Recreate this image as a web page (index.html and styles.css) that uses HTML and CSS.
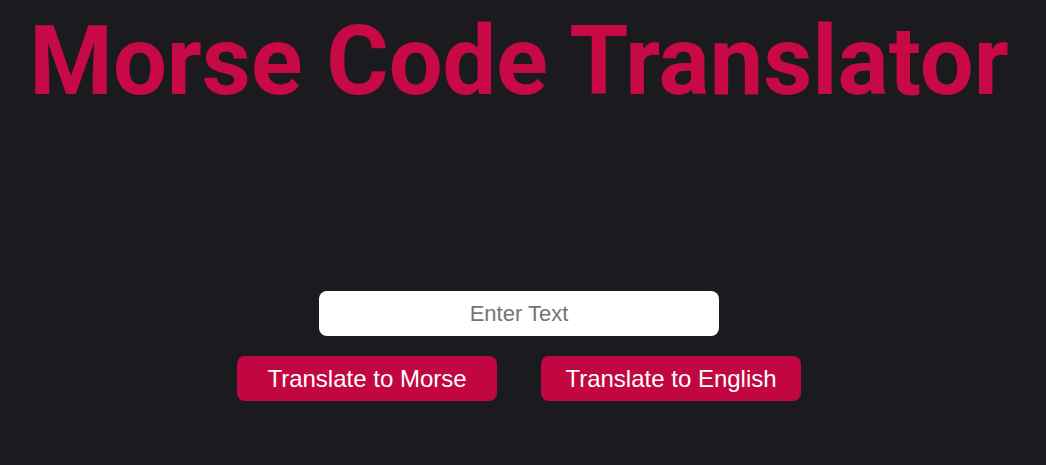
FILE: index.html
```html
<!DOCTYPE html>
<html>
<head>
  <title>Morse Code Translator</title>
  <link rel="stylesheet" href="styles.css">
</head>
<body>
  <h1 class="title">Morse Code Translator</h1>
  <div class="translator">
    <input type="text" id="textInput" class="text-input" placeholder="Enter Text">
    <div class="actions">
      <button type="button" class="btn" id="toMorse">Translate to Morse</button>
      <button type="button" class="btn" id="toEnglish">Translate to English</button>
    </div>
  </div>
</body>
</html>
```

FILE: styles.css
```css
body {
  margin: 0;
  padding-right: 8px;
  background: #1b1a1f;
  font-family: "Liberation Sans", Arial, sans-serif;
}

.title {
  margin: 5px 0 0;
  text-align: center;
  font-family: Roboto, "Liberation Sans", sans-serif;
  font-weight: 700;
  font-size: 95.5px;
  color: #c70a45;
}

.translator {
  display: flex;
  flex-direction: column;
  align-items: center;
  margin-top: 174px;
}

.text-input {
  width: 400px;
  height: 45px;
  box-sizing: border-box;
  border: none;
  border-radius: 8px;
  background: #fff;
  text-align: center;
  font-family: "Liberation Sans", Arial, sans-serif;
  font-size: 22px;
  outline: none;
}

.text-input::placeholder {
  color: #757575;
}

.actions {
  display: flex;
  gap: 44px;
  margin-top: 20px;
}

.btn {
  width: 260px;
  height: 45px;
  border: none;
  border-radius: 8px;
  background: #c20642;
  color: #fff;
  font-family: "Liberation Sans", Arial, sans-serif;
  font-size: 24px;
  cursor: pointer;
}
```
